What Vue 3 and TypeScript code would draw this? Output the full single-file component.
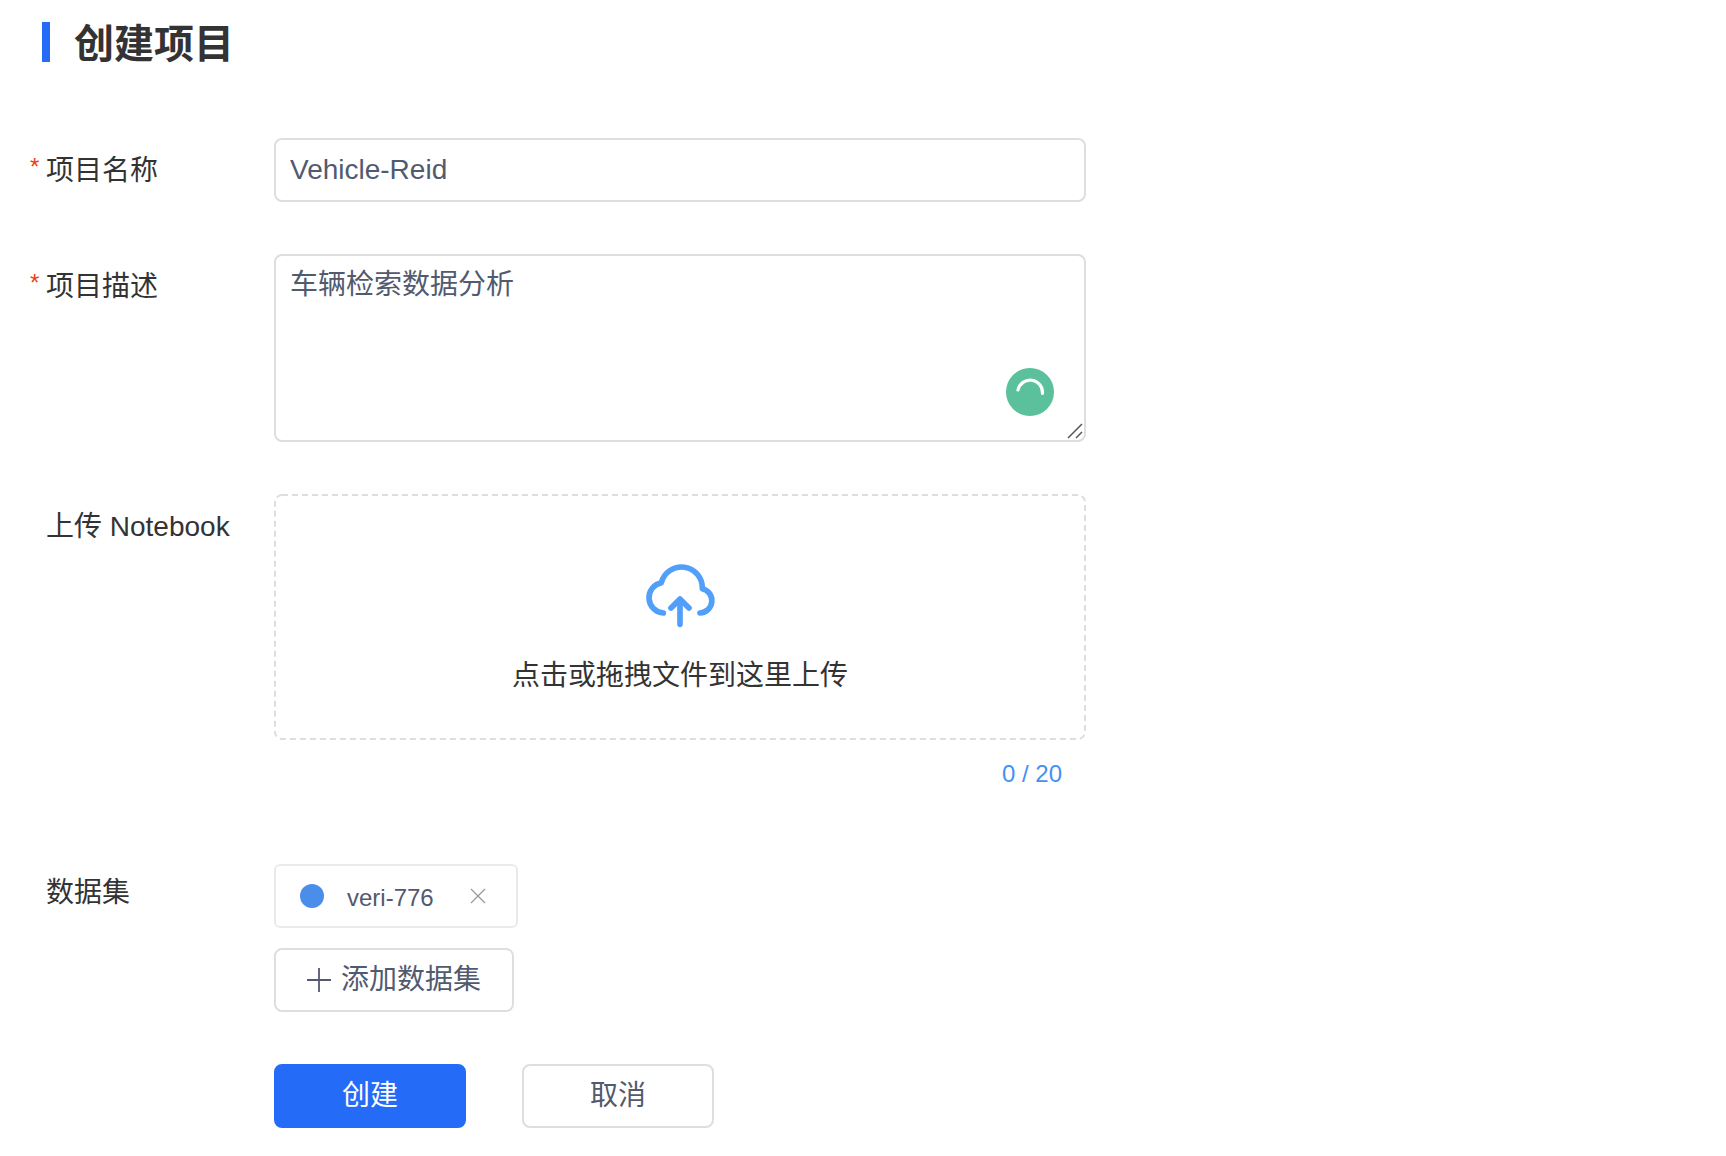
<script setup lang="ts">
import { ref } from 'vue'

const name = ref('Vehicle-Reid')
const description = ref('车辆检索数据分析')
const maxFiles = 20
const files = ref<File[]>([])
const datasets = ref<string[]>(['veri-776'])

function onFiles(event: Event) {
  const input = event.target as HTMLInputElement
  files.value = Array.from(input.files ?? []).slice(0, maxFiles)
}

function removeDataset(item: string) {
  datasets.value = datasets.value.filter((d) => d !== item)
}
</script>

<template>
  <main class="page">
    <h1 class="title">创建项目</h1>

    <form class="form" @submit.prevent>
      <div class="row">
        <label class="label required" for="name">项目名称</label>
        <div class="control">
          <input id="name" v-model="name" class="field" type="text" />
        </div>
      </div>

      <div class="row">
        <label class="label required" for="description">项目描述</label>
        <div class="control area">
          <textarea id="description" v-model="description" class="field multiline" spellcheck="false"></textarea>
          <svg class="spinner" viewBox="0 0 48 48" aria-hidden="true">
            <circle cx="24" cy="24" r="24" fill="#5bc09c" />
            <path d="M12 22.500A12.400 12.400 0 0 1 36.500 26" transform="translate(0 -.5)" fill="none" stroke="#fff" stroke-width="3.200" stroke-linecap="round" />
          </svg>
          <svg class="grip" viewBox="0 0 16 16" aria-hidden="true">
            <path d="M1 15 15 1M9 15 15 9" fill="none" stroke="#555" stroke-width="1.500" />
          </svg>
        </div>
      </div>

      <div class="row">
        <label class="label" for="notebook">上传 Notebook</label>
        <div class="control">
          <label class="dropzone">
            <svg class="outline" aria-hidden="true">
              <rect class="dashes" x="1" y="1" rx="7" />
            </svg>
            <input id="notebook" class="file" type="file" multiple @change="onFiles" />
            <svg class="cloud" viewBox="432 70 216 195" aria-hidden="true">
              <g fill="none" stroke="#529ffa" stroke-width="17" stroke-linecap="round" stroke-linejoin="round">
                <path d="M490 220A46 46 0 0 1 484 129A62.500 62.500 0 0 1 607 147A37 37 0 0 1 600 220" />
                <path d="M540 178V254M513 205 540 178 567 205" />
              </g>
            </svg>
            <span>点击或拖拽文件到这里上传</span>
          </label>
          <p class="count">{{ files.length }} / {{ maxFiles }}</p>
        </div>
      </div>

      <div class="row" role="group" aria-labelledby="datasets">
        <span id="datasets" class="label group-label">数据集</span>
        <div class="control stack">
          <div v-for="item in datasets" :key="item" class="chip">
            <span class="dot"></span>
            <span class="chip-name">{{ item }}</span>
            <button class="remove" type="button" :aria-label="`移除 ${item}`" @click="removeDataset(item)">
              <svg viewBox="0 0 16 16" aria-hidden="true">
                <path d="M1 1 15 15M15 1 1 15" fill="none" stroke="#999" stroke-width="1.300" />
              </svg>
            </button>
          </div>
          <button class="button add" type="button">
            <svg class="plus" viewBox="0 0 24 24" aria-hidden="true">
              <path d="M0 12H24M12 0V24" fill="none" stroke="#515a6e" stroke-width="1.800" />
            </svg>
            添加数据集
          </button>
        </div>
      </div>

      <div class="row">
        <span class="label"></span>
        <div class="control actions">
          <button class="button action primary" type="submit">创建</button>
          <button class="button action" type="button">取消</button>
        </div>
      </div>
    </form>
  </main>
</template>

<style>
body {
  margin: 0;
  background: #fff;
}
</style>

<style scoped>
.page {
  padding: 22px 30px 28px;
  color: #333;
  font: 28px/42px "Liberation Sans", "Noto Sans CJK SC", sans-serif;
}

.title {
  box-sizing: border-box;
  height: 40px;
  margin: 0 0 76px 12px;
  padding-left: 24px;
  border-left: 8px solid #246bf8;
  font-size: 40px;
  font-weight: 600;
  line-height: 44px;
}

.form {
  display: flex;
  flex-direction: column;
  gap: 52px;
}

.row {
  display: flex;
  align-items: flex-start;
}

.label {
  position: relative;
  flex: 0 0 244px;
  box-sizing: border-box;
  padding: 12px 0 10px 16px;
  white-space: nowrap;
}

.group-label {
  padding-top: 8px;
}

.required::before {
  content: "*";
  position: absolute;
  top: 8px;
  left: 0;
  color: #ed4014;
  font-size: 24px;
}

.control {
  flex: 1;
  min-width: 0;
  max-width: 812px;
}

.field {
  display: block;
  box-sizing: border-box;
  width: 100%;
  height: 64px;
  margin: 0;
  padding: 8px 14px;
  border: 2px solid #dcdee2;
  border-radius: 8px;
  outline: none;
  background: #fff;
  color: #515a6e;
  font: inherit;
}

.area {
  position: relative;
}

.multiline {
  height: 188px;
  resize: none;
}

.spinner {
  position: absolute;
  right: 32px;
  bottom: 26px;
  width: 48px;
  height: 48px;
}

.grip {
  position: absolute;
  right: 3px;
  bottom: 3px;
  width: 16px;
  height: 16px;
}

.dropzone {
  position: relative;
  display: flex;
  flex-direction: column;
  align-items: center;
  gap: 32px;
  box-sizing: border-box;
  height: 246px;
  padding-top: 69px;
  cursor: pointer;
}

.outline {
  position: absolute;
  top: 0;
  left: 0;
  width: 100%;
  height: 100%;
}

.dashes {
  width: calc(100% - 2px);
  height: calc(100% - 2px);
  fill: none;
  stroke: #dcdee2;
  stroke-width: 2px;
  stroke-dasharray: 6 4;
}

.file {
  position: absolute;
  width: 1px;
  height: 1px;
  opacity: 0;
}

.cloud {
  width: 72px;
  height: 65px;
}

.dropzone span {
  line-height: 32px;
}

.count {
  margin: 0;
  padding: 16px 24px 20px;
  color: #4490f5;
  font-size: 24px;
  line-height: 36px;
  text-align: right;
}

.stack {
  display: flex;
  flex-direction: column;
  align-items: flex-start;
  gap: 20px;
}

.chip {
  display: flex;
  align-items: center;
  box-sizing: border-box;
  height: 64px;
  padding: 0 30px 0 24px;
  border: 2px solid #e8eaec;
  border-radius: 6px;
  color: #515a6e;
  font-size: 24px;
}

.dot {
  width: 24px;
  height: 24px;
  border-radius: 50%;
  background: #4a8eea;
}

.chip-name {
  padding: 4px 36px 0 23px;
}

.remove {
  width: 16px;
  height: 16px;
  padding: 0;
  border: 0;
  background: none;
  cursor: pointer;
}

.remove svg {
  display: block;
}

.button {
  display: flex;
  align-items: center;
  justify-content: center;
  box-sizing: border-box;
  height: 64px;
  margin: 0;
  padding: 0 31px;
  border: 2px solid #dcdee2;
  border-radius: 8px;
  background: #fff;
  color: #515a6e;
  font: inherit;
  cursor: pointer;
}

.add {
  gap: 10px;
}

.plus {
  width: 24px;
  height: 24px;
}

.actions {
  display: flex;
  gap: 56px;
}

.action {
  width: 192px;
}

.primary {
  border-color: #246bf8;
  background: #246bf8;
  color: #fff;
}
</style>
